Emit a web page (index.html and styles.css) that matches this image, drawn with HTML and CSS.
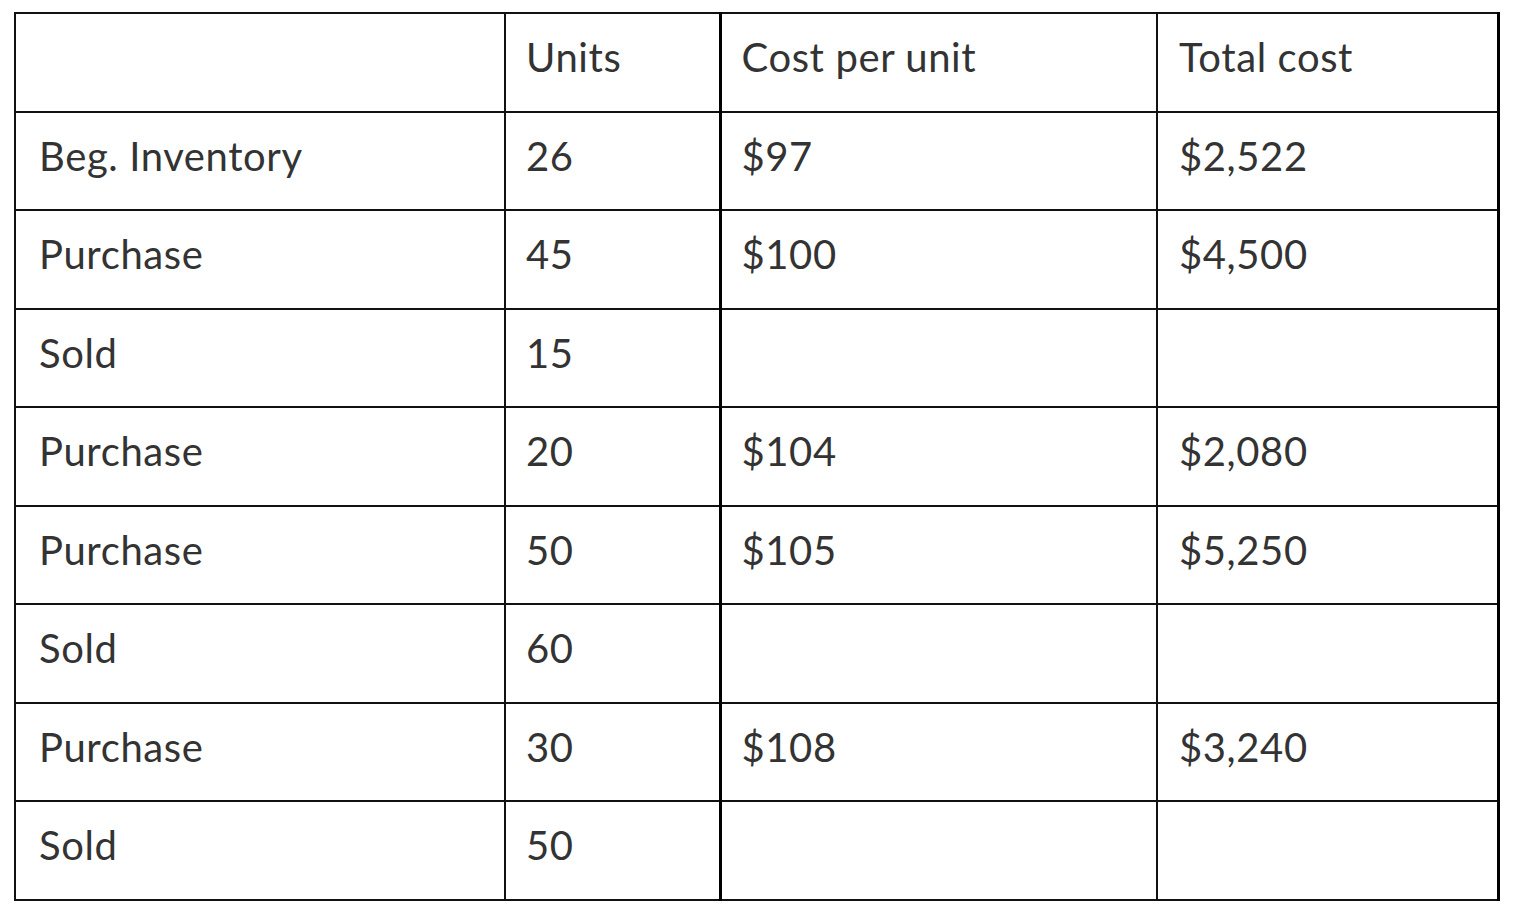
FILE: index.html
```html
<!DOCTYPE html>
<html>
<head>
<meta charset="utf-8">
<link rel="stylesheet" href="styles.css">
</head>
<body>
<table class="inv">
  <colgroup>
    <col class="c1"><col class="c2"><col class="c3"><col class="c4">
  </colgroup>
  <tr><td></td><td>Units</td><td class="thick">Cost per unit</td><td>Total cost</td></tr>
  <tr><td>Beg. Inventory</td><td>26</td><td class="thick">$97</td><td>$2,522</td></tr>
  <tr><td>Purchase</td><td>45</td><td class="thick">$100</td><td>$4,500</td></tr>
  <tr><td>Sold</td><td>15</td><td class="thick"></td><td></td></tr>
  <tr><td>Purchase</td><td>20</td><td class="thick">$104</td><td>$2,080</td></tr>
  <tr><td>Purchase</td><td>50</td><td class="thick">$105</td><td>$5,250</td></tr>
  <tr><td>Sold</td><td>60</td><td class="thick"></td><td></td></tr>
  <tr><td>Purchase</td><td>30</td><td class="thick">$108</td><td>$3,240</td></tr>
  <tr><td>Sold</td><td>50</td><td class="thick"></td><td></td></tr>
</table>
</body>
</html>
```

FILE: styles.css
```css
html, body {
  margin: 0;
  background: #fff;
}
body {
  padding: 12px 0 0 14px;
}
.inv {
  border-collapse: collapse;
  table-layout: fixed;
  width: 1483px;
  font-family: Lato, "Noto Sans", sans-serif;
  font-size: 40px;
  letter-spacing: 0.6px;
  color: #333;
}
.c1 { width: 490px; }
.c2 { width: 215px; }
.c3 { width: 437px; }
.c4 { width: 341px; }
.inv td {
  border: 2px solid #111;
  height: 98.5px;
  box-sizing: border-box;
  padding: 19px 20px 0 23px;
  vertical-align: top;
  line-height: 48px;
}
.inv td:nth-child(2) { padding-left: 20px; }
.inv td.thick { border-left: 3px solid #000; padding-left: 20px; }
.inv td:last-child { border-right: 3px solid #000; padding-left: 21px; }
```
